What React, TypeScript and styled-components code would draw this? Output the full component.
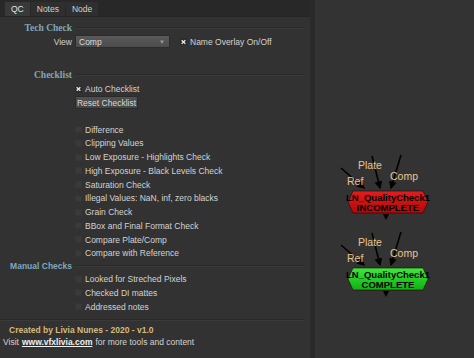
import styled, { createGlobalStyle } from "styled-components";

const GlobalStyle = createGlobalStyle`
    html, body {
        margin: 0;
        padding: 0;
        background: #333333;
    }
    body {
        font-family: "Liberation Sans", Arial, sans-serif;
        font-size: 8.5px;
        color: #d2d2d2;
    }
`;

const Root = styled.div`
    display: flex;
    width: 474px;
    height: 358px;
    overflow: hidden;
    background: #333333;
`;

const Panel = styled.div`
    width: 311px;
    display: flex;
    flex-direction: column;
    background: #323232;
    border-right: 4px solid #2a2a2a;
`;

const TabBar = styled.div`
    height: 16px;
    display: flex;
    align-items: flex-end;
    gap: 1px;
    padding-left: 5px;
    background: #282828;
    box-sizing: border-box;
`;

const Tab = styled.div<{ $active?: boolean }>`
    height: 14px;
    padding: 0 6px;
    display: flex;
    align-items: center;
    background: ${p => (p.$active ? "#393939" : "#2f2f2f")};
    color: ${p => (p.$active ? "#e6e6e6" : "#d0d0d0")};
    font-size: 8.5px;
`;

const Content = styled.div`
    flex: 1;
    display: flex;
    flex-direction: column;
    padding-top: 4px;
    border-top: 1px solid #262626;
    border-right: 1px solid #2a2a2a;
`;

const Row = styled.div<{ $h?: number }>`
    display: grid;
    grid-template-columns: 72px 1fr;
    column-gap: 3px;
    align-items: center;
    height: ${p => p.$h ?? 13.75}px;
`;

const Label = styled.div`
    text-align: right;
    white-space: nowrap;
`;

const Heading = styled.div<{ $serif?: boolean }>`
    text-align: right;
    white-space: nowrap;
    font-weight: bold;
    color: #7fa8bb;
    font-family: ${p => (p.$serif ? '"Liberation Serif", serif' : '"Liberation Sans", Arial, sans-serif')};
    font-size: ${p => (p.$serif ? 9.5 : 8.5)}px;
`;

const Rule = styled.div`
    height: 0;
    margin-right: 6px;
    border-top: 1px solid #282828;
    border-bottom: 1px solid #3a3a3a;
`;

const Field = styled.div`
    display: flex;
    align-items: center;
    gap: 10px;
`;

const Dropdown = styled.div`
    width: 95px;
    height: 13px;
    box-sizing: border-box;
    display: flex;
    align-items: center;
    justify-content: space-between;
    padding: 0 4px 0 3px;
    background: linear-gradient(#5a5a5a, #4c4c4c);
    border: 1px solid #2c2c2c;
    color: #dedede;
`;

const Caret = styled.span`
    font-size: 6px;
    color: #9a9a9a;
`;

const Check = styled.label`
    display: flex;
    align-items: center;
    gap: 3px;
    white-space: nowrap;
`;

const Box = styled.span<{ $on?: boolean }>`
    width: 7px;
    height: 7px;
    box-sizing: border-box;
    display: inline-flex;
    align-items: center;
    justify-content: center;
    background: ${p => (p.$on ? "#2b2b2b" : "#3a3a3a")};
    border: 1px solid ${p => (p.$on ? "#2b2b2b" : "#363636")};
`;

const Button = styled.div`
    width: 63px;
    height: 13px;
    box-sizing: border-box;
    display: flex;
    align-items: center;
    justify-content: center;
    background: linear-gradient(#505050, #454545);
    border: 1px solid #2a2a2a;
    color: #d8d8d8;
`;

const Spacer = styled.div<{ $h: number }>`
    height: ${p => p.$h}px;
`;

const Divider = styled.div`
    margin: 0 6px 0 0;
    border-top: 1px solid #282828;
    border-bottom: 1px solid #3a3a3a;
`;

const Credits = styled.div`
    display: flex;
    flex-direction: column;
    padding-top: 4px;
`;

const Credit = styled.div`
    padding-left: 9px;
    height: 11.5px;
    display: flex;
    align-items: center;
    font-weight: bold;
    color: #d5bb7c;
`;

const Visit = styled.div`
    padding-left: 3px;
    height: 11.5px;
    display: flex;
    align-items: center;
    gap: 3px;
    color: #d2d2d2;
`;

const Link = styled.span`
    font-weight: bold;
    text-decoration: underline;
    color: #f0f0f0;
`;

const Graph = styled.div`
    flex: 1;
    background: #333333;
`;

const Cross = () => (
    <svg width="6" height="6" viewBox="0 0 6 6">
        <path d="M0.8 0.8 L5.2 5.2 M5.2 0.8 L0.8 5.2" stroke="#e8e8e8" strokeWidth="1.6" />
    </svg>
);

const CheckBox = ({ on, text }: { on?: boolean; text: string }) => (
    <Check>
        <Box $on={on}>{on && <Cross />}</Box>
        {text}
    </Check>
);

const checklist = [
    "Difference",
    "Clipping Values",
    "Low Exposure - Highlights Check",
    "High Exposure - Black Levels Check",
    "Saturation Check",
    "Illegal Values: NaN, inf, zero blacks",
    "Grain Check",
    "BBox and Final Format Check",
    "Compare Plate/Comp",
    "Compare with Reference",
];

const manual = ["Looked for Streched Pixels", "Checked DI mattes", "Addressed notes"];

type NodeProps = { y: number; fill: string; top: string; status: string };

const labelFont = { fill: "#e9c48e", fontSize: 10.5, fontFamily: "Liberation Sans, sans-serif" };
const nodeFont = { fill: "#000", fontSize: 9.5, fontWeight: "bold", fontFamily: "Liberation Sans, sans-serif" };

const QcNode = ({ y, fill, top, status }: NodeProps) => {
    const gid = `g${status}`;
    return (
        <g transform={`translate(0 ${y})`}>
            <defs>
                <linearGradient id={gid} x1="0" y1="0" x2="0" y2="1">
                    <stop offset="0" stopColor={top} />
                    <stop offset="1" stopColor={fill} />
                </linearGradient>
                <marker id={`a${status}`} viewBox="0 0 6 6" refX="5" refY="3" markerWidth="5" markerHeight="5" orient="auto">
                    <path d="M0 0 L6 3 L0 6 Z" fill="#000" />
                </marker>
            </defs>
            <line x1="341" y1="168" x2="364" y2="188" stroke="#000" strokeWidth="1.6" markerEnd={`url(#a${status})`} />
            <line x1="372" y1="156" x2="380" y2="188" stroke="#000" strokeWidth="1.6" markerEnd={`url(#a${status})`} />
            <line x1="401" y1="155" x2="391" y2="188" stroke="#000" strokeWidth="1.6" markerEnd={`url(#a${status})`} />
            <text x="358" y="169" {...labelFont}>Plate</text>
            <text x="390" y="180" {...labelFont}>Comp</text>
            <text x="347" y="185" {...labelFont}>Ref</text>
            <path
                d="M353 191 L423 191 L428 202 L423 213 L353 213 L348 202 Z"
                fill={`url(#${gid})`}
                stroke="#2a0000"
                strokeOpacity="0.6"
                strokeWidth="1"
            />
            <text x="388" y="201" textAnchor="middle" {...nodeFont}>LN_QualityCheck1</text>
            <text x="388" y="210.5" textAnchor="middle" {...nodeFont}>{status}</text>
            <path d="M383 214 L389 214 L386 220 Z" fill="#000" />
        </g>
    );
};

export default function App() {
    return (
        <>
            <GlobalStyle />
            <Root>
                <Panel>
                    <TabBar>
                        <Tab $active>QC</Tab>
                        <Tab>Notes</Tab>
                        <Tab>Node</Tab>
                    </TabBar>
                    <Content>
                        <Row>
                            <Heading $serif>Tech Check</Heading>
                            <Rule />
                        </Row>
                        <Row>
                            <Label>View</Label>
                            <Field>
                                <Dropdown>
                                    Comp
                                    <Caret>▼</Caret>
                                </Dropdown>
                                <CheckBox on text="Name Overlay On/Off" />
                            </Field>
                        </Row>
                        <Spacer $h={20} />
                        <Row>
                            <Heading $serif>Checklist</Heading>
                            <Rule />
                        </Row>
                        <Row>
                            <span />
                            <CheckBox on text="Auto Checklist" />
                        </Row>
                        <Row>
                            <span />
                            <Button>Reset Checklist</Button>
                        </Row>
                        <Spacer $h={13} />
                        {checklist.map(item => (
                            <Row key={item}>
                                <span />
                                <CheckBox text={item} />
                            </Row>
                        ))}
                        <Row $h={12}>
                            <Heading>Manual Checks</Heading>
                            <Rule />
                        </Row>
                        {manual.map(item => (
                            <Row key={item}>
                                <span />
                                <CheckBox text={item} />
                            </Row>
                        ))}
                        <Spacer $h={5} />
                        <Divider />
                        <Credits>
                            <Credit>Created by Livia Nunes - 2020 - v1.0</Credit>
                            <Visit>
                                Visit <Link>www.vfxlivia.com</Link> for more tools and content
                            </Visit>
                        </Credits>
                    </Content>
                </Panel>
                <Graph>
                    <svg width="159" height="358" viewBox="315 0 159 358">
                        <QcNode y={0} fill="#b30808" top="#e31d1d" status="INCOMPLETE" />
                        <QcNode y={77} fill="#10b010" top="#3ee83e" status="COMPLETE" />
                    </svg>
                </Graph>
            </Root>
        </>
    );
}
